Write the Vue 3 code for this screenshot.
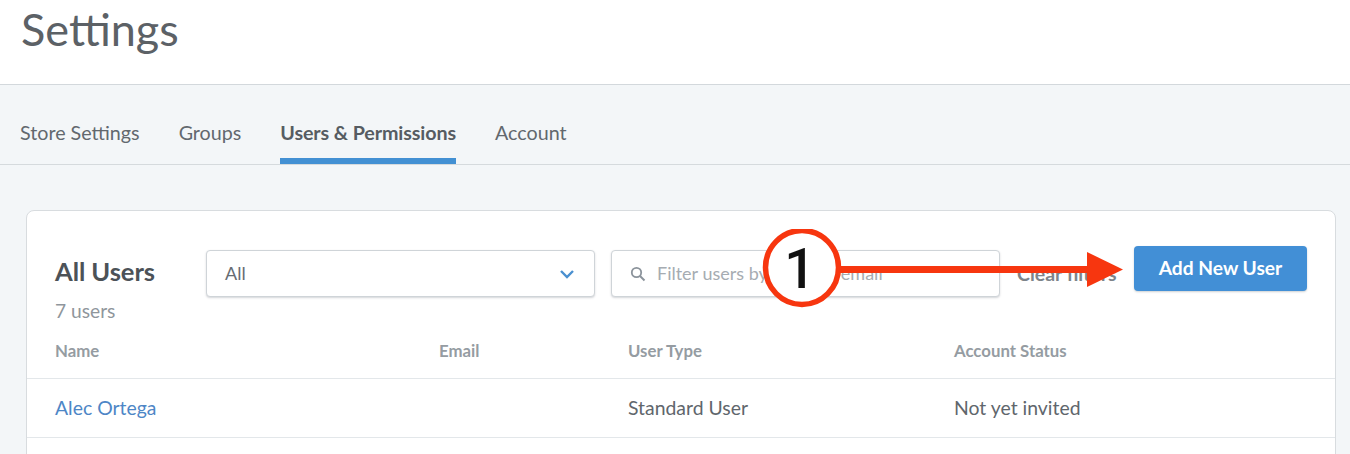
<script setup>
const tabs = [
  { label: 'Store Settings' },
  { label: 'Groups' },
  { label: 'Users & Permissions', active: true },
  { label: 'Account' }
]
const rows = [{ name: 'Alec Ortega', email: '', type: 'Standard User', status: 'Not yet invited' }]
</script>

<template>
  <div class="page">
    <header class="head"><h1>Settings</h1></header>
    <div class="body">
      <nav class="tabs">
        <a v-for="t in tabs" :key="t.label" class="tab" :class="{ active: t.active }">{{ t.label }}</a>
      </nav>
      <section class="card">
        <div class="toolbar">
          <div class="titles">
            <h2>All Users</h2>
            <p>7 users</p>
          </div>
          <div class="field select">
            <span>All</span>
            <svg width="16" height="10" viewBox="0 0 16 10"><path d="M2 2l6 6 6-6" fill="none" stroke="#4a90d0" stroke-width="2.400"/></svg>
          </div>
          <div class="field search">
            <svg width="16" height="16" viewBox="0 0 16 16"><circle cx="6.500" cy="6.500" r="4.700" fill="none" stroke="#8b939b" stroke-width="1.800"/><path d="M10 10l4.500 4.500" stroke="#8b939b" stroke-width="2"/></svg>
            <span>Filter users by name or email</span>
          </div>
          <span class="clear">Clear filters</span>
          <button class="add">Add New User</button>
        </div>
        <div class="grid thead">
          <span>Name</span><span>Email</span><span>User Type</span><span>Account Status</span>
        </div>
        <div v-for="r in rows" :key="r.name" class="grid row">
          <a>{{ r.name }}</a><span>{{ r.email }}</span><span>{{ r.type }}</span><span>{{ r.status }}</span>
        </div>
      </section>
    </div>
    <svg class="callout" width="400" height="90" viewBox="0 0 400 90">
      <rect x="76" y="37" width="262" height="7" fill="#f7360f"/>
      <path d="M325 23L361 40.500L325 58Z" fill="#f7360f"/>
      <ellipse cx="40" cy="38.500" rx="36.500" ry="37" fill="#fff" stroke="#f7360f" stroke-width="5.500"/>
      <text x="38" y="59" text-anchor="middle" class="num">1</text>
    </svg>
  </div>
</template>

<style>
html, body { margin: 0; background: #fff; overflow: hidden; }
</style>

<style scoped>
.page { position: relative; width: 1350px; height: 454px; overflow: hidden; font-family: Lato, "Open Sans", sans-serif; color: #5a6066; }
.head { height: 85px; box-sizing: border-box; padding: 2px 21px 0; border-bottom: 1px solid #d3d8dc; background: #fff; }
h1 { margin: 0; font-size: 45px; line-height: 54px; font-weight: 400; color: #5c6166; }
.body { height: 369px; background: #f3f6f8; box-sizing: border-box; }
.tabs { display: flex; gap: 39px; height: 80px; box-sizing: border-box; padding: 0 20px; border-bottom: 1px solid #d5dadd; }
.tab { display: block; padding-top: 36px; height: 79px; box-sizing: border-box; font-size: 19.700px; line-height: 24px; color: #62686e; }
.tab.active { font-weight: 700; color: #565c62; letter-spacing: -0.100px; border-bottom: 6px solid #4290d3; }
.card { margin: 45px 14px 0 26px; background: #fff; border: 1px solid #d8dcdf; border-radius: 8px; height: 300px; box-sizing: border-box; }
.toolbar { display: flex; align-items: flex-start; height: 112px; padding: 35px 28px 0 28px; box-sizing: border-box; }
.titles { width: 151px; flex: none; }
h2 { margin: 10px 0 0; font-size: 25.500px; line-height: 30px; font-weight: 700; color: #4c5257; letter-spacing: -0.050px; }
.titles p { margin: 13px 0 0; font-size: 19.200px; line-height: 24px; color: #8f969c; }
.field { display: flex; align-items: center; width: 389px; height: 47px; margin-top: 4px; box-sizing: border-box; flex: none; background: #fff; border: 1px solid #cfd4d8; border-radius: 4px; box-shadow: 0 1px 2px rgba(60, 70, 80, .22); font-size: 18px; }
.field span { margin-bottom: 2px; }
.select { justify-content: space-between; padding: 0 19px 0 18px; color: #666c72; margin-right: 16px; }
.search { gap: 11px; padding-left: 18px; color: #a6acb2; }
.clear { margin: 16px 0 0 17px; width: 100px; flex: none; font-size: 19.500px; line-height: 24px; font-weight: 700; color: #7d848a; white-space: nowrap; }
.add { width: 173px; height: 45px; margin-left: 17px; padding: 0 0 2px; flex: none; border: 0; border-radius: 4px; background: #428fd6; color: #fff; font: 700 19.200px Lato, sans-serif; box-shadow: 0 1px 2px rgba(60, 70, 80, .25); }
.grid { display: grid; grid-template-columns: 384px 189px 326px 1fr; padding-left: 28px; }
.thead { height: 56px; padding-top: 16px; box-sizing: border-box; border-bottom: 1px solid #e3e7ea; font-size: 16.800px; line-height: 24px; font-weight: 700; color: #959ca2; }
.row { height: 59px; padding-bottom: 2px; align-items: center; border-bottom: 1px solid #e3e7ea; font-size: 19.400px; color: #60666c; box-sizing: border-box; }
.row a { color: #4d86c6; }
.callout { position: absolute; left: 762px; top: 229px; }
.num { font-family: Roboto, sans-serif; font-size: 55px; font-weight: 500; fill: #111; }
</style>
